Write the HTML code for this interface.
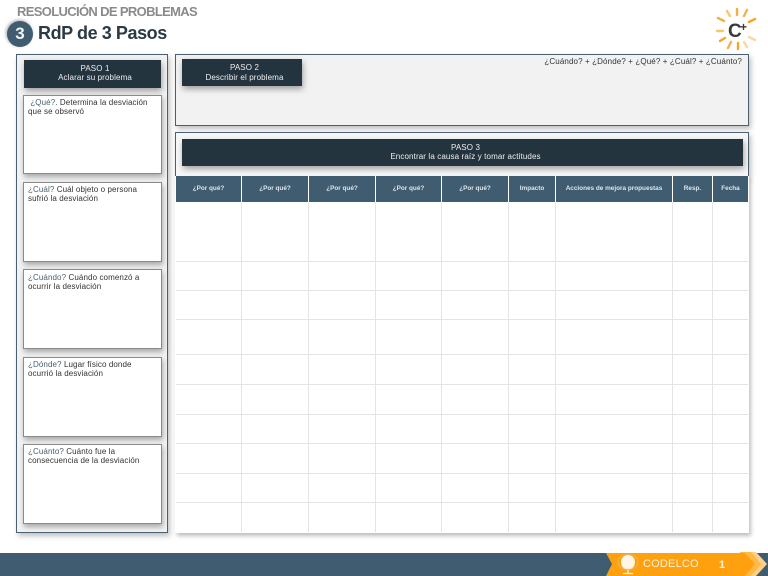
<!DOCTYPE html>
<html lang="es"><head><meta charset="utf-8"><style>
html,body{margin:0;padding:0;background:#fff}
body{width:768px;height:576px;position:relative;overflow:hidden;font-family:"Liberation Sans",sans-serif}
div{position:absolute;box-sizing:border-box}
.t{white-space:nowrap;font-size:8px;line-height:9px;color:#333}
.panel{border:1px solid #4a6070;background:#f2f2f2;box-shadow:2px 3px 5px rgba(0,0,0,.25)}
.dark{background:#23343f;color:#eee;text-align:center;font-size:8px;line-height:9px;box-shadow:1px 3px 6px rgba(0,0,0,.35);letter-spacing:.12px}
.box{left:23px;width:139px;background:#fff;border:1px solid #8a8a8a;box-shadow:1px 3px 5px rgba(0,0,0,.3);padding:2px 4px;font-size:8px;line-height:9px;color:#333;letter-spacing:.1px;white-space:nowrap}
.h{top:176px;height:26px;background:#3f5c70;color:#dfe6ea;font-size:6.4px;font-weight:bold;text-align:center;line-height:25px;white-space:nowrap}
.v{top:202px;height:330px;width:1px;background:#e4e4e4}
.r{left:176px;width:572px;height:1px;background:#e4e4e4}
</style></head><body>
<div class="t" style="left:17px;top:4px;font-size:13px;line-height:15px;color:#8a8a8a;font-weight:bold;letter-spacing:-.65px">RESOLUCIÓN DE PROBLEMAS</div>
<div style="left:7px;top:21px;width:26px;height:26px;border-radius:50%;background:#3f5c70;box-shadow:-1px -1px 3px rgba(0,0,0,.35)"></div>
<div class="t" style="left:7px;top:23px;width:26px;text-align:center;font-size:17px;line-height:22px;font-weight:bold;color:#f2f2f2">3</div>
<div class="t" style="left:38px;top:22px;font-size:18px;line-height:22px;font-weight:bold;color:#2c3a44;letter-spacing:-.42px">RdP de 3 Pasos</div>

<svg style="position:absolute;left:712px;top:4px" width="48" height="48" viewBox="0 0 48 48">
<g stroke-width="2.4" stroke-linecap="round" fill="none">
<path d="M25 5V11" stroke="#f5b041"/><path d="M15 7L18 12" stroke="#f8c66d"/><path d="M35 6L32 12" stroke="#f5b041"/>
<path d="M6 14L12 17" stroke="#f5b041"/><path d="M43 15L37 18" stroke="#f5a623"/><path d="M5 27H11" stroke="#f8c66d"/>
<path d="M8 37L13 34" stroke="#f5a623"/><path d="M16 44L19 38" stroke="#f5b041"/><path d="M26 45V39" stroke="#f5a623"/>
<path d="M35 43L32 38" stroke="#f8d9a0"/><path d="M43 36L37 33" stroke="#f8d9a0"/>
</g>
<text x="16" y="33" font-family="Liberation Sans" font-size="19" font-weight="bold" fill="#3a3a3a">C</text>
<text x="28" y="27" font-family="Liberation Sans" font-size="12" font-weight="bold" fill="#3a3a3a">+</text>
</svg>

<div class="panel" style="left:16px;top:54px;width:152px;height:479px"></div>
<div class="dark" style="left:24px;top:60px;width:137px;height:28px;padding:4px 0 0 5px">PASO 1<br>Aclarar su problema</div>
<div class="box" style="top:95px;height:79px"><span style="color:#4a6070">&nbsp;¿Qué?.</span> Determina la desviación<br>que se observó</div>
<div class="box" style="top:182px;height:80px"><span style="color:#4a6070">¿Cuál?</span> Cuál objeto o persona<br>sufrió la desviación</div>
<div class="box" style="top:269px;height:80px;padding-top:3px"><span style="color:#4a6070">¿Cuándo?</span> Cuándo comenzó a<br>ocurrir la desviación</div>
<div class="box" style="top:357px;height:80px"><span style="color:#4a6070">¿Dónde?</span> Lugar físico donde<br>ocurrió la desviación</div>
<div class="box" style="top:444px;height:80px"><span style="color:#4a6070">¿Cuánto?</span> Cuánto fue la<br>consecuencia de la desviación</div>

<div class="panel" style="left:175px;top:54px;width:574px;height:72px"></div>
<div class="dark" style="left:182px;top:59px;width:120px;height:27px;padding:4px 0 0 5px;line-height:9.5px">PASO 2<br>Describir el problema</div>
<div class="t" style="right:26px;top:57px;font-size:8px;letter-spacing:.12px">¿Cuándo? + ¿Dónde? + ¿Qué? + ¿Cuál? + ¿Cuánto?</div>

<div class="panel" style="left:175px;top:132px;width:574px;height:45px;background:#f7f7f7"></div>
<div style="left:175px;top:176px;width:574px;height:357px;background:#fff;box-shadow:2px 3px 4px rgba(0,0,0,.25)"></div>
<div class="dark" style="left:182px;top:139px;width:561px;height:27px;padding:4px 0 0 6px">PASO 3<br>Encontrar la causa raíz y tomar actitudes</div>

<div class="h" style="left:176px;width:65px">¿Por qué?</div>
<div class="h" style="left:242px;width:66px">¿Por qué?</div>
<div class="h" style="left:309px;width:66px">¿Por qué?</div>
<div class="h" style="left:376px;width:65px">¿Por qué?</div>
<div class="h" style="left:442px;width:66px">¿Por qué?</div>
<div class="h" style="left:509px;width:46px">Impacto</div>
<div class="h" style="left:556px;width:116px">Acciones de mejora propuestas</div>
<div class="h" style="left:673px;width:39px">Resp.</div>
<div class="h" style="left:713px;width:35px">Fecha</div>

<div class="v" style="left:241px"></div><div class="v" style="left:308px"></div><div class="v" style="left:375px"></div>
<div class="v" style="left:441px"></div><div class="v" style="left:508px"></div><div class="v" style="left:555px"></div>
<div class="v" style="left:672px"></div><div class="v" style="left:712px"></div>
<div class="r" style="top:261px"></div><div class="r" style="top:290px"></div><div class="r" style="top:319px"></div>
<div class="r" style="top:354px"></div><div class="r" style="top:384px"></div><div class="r" style="top:414px"></div>
<div class="r" style="top:443px"></div><div class="r" style="top:473px"></div><div class="r" style="top:502px"></div>

<div style="left:0;top:553px;width:768px;height:23px;background:#3f5c70"></div>
<svg style="position:absolute;left:600px;top:552px" width="168" height="24" viewBox="0 0 168 24">
<path d="M140 0H156L167 12L156 24H140Z" fill="#ffd08a"/>
<path d="M140 0H151L161 12L151 24H140Z" fill="#ffb947"/>
<path d="M6 1H145L155 12L145 24H6L12 12Z" fill="#ffa10f"/>
<path d="M21 10A7 7 0 0 1 35 10Q35 15 30 18H26Q21 15 21 10Z" fill="#fff6e6"/>
<ellipse cx="28" cy="10" rx="10" ry="7.5" fill="none" stroke="#e8b560" stroke-width="1"/>
<path d="M28 18V21M23 21.5H33" stroke="#fff6e6" stroke-width="1.3" fill="none"/>
</svg>
<div class="t" style="left:643px;top:558px;font-size:11px;line-height:13px;color:#fff3dd;letter-spacing:.2px">CODELCO</div>
<div class="t" style="left:719px;top:559px;font-size:11px;line-height:13px;font-weight:bold;color:#fff3dd">1</div>
</body></html>
